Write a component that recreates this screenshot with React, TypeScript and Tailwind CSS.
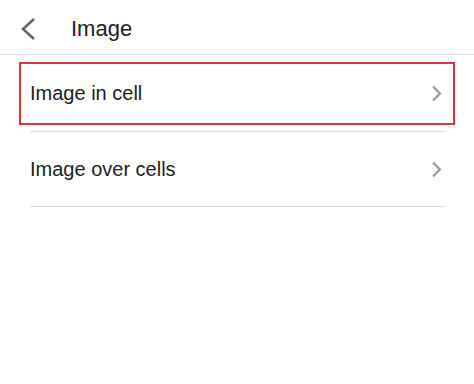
import React from "react";

const Chevron = () => (
  <svg width="11" height="17" viewBox="0 0 11 17" className="shrink-0">
    <polyline
      points="2,1.5 9,8.5 2,15.5"
      fill="none"
      stroke="#9b9b9b"
      strokeWidth="2.2"
    />
  </svg>
);

const Row = ({ label, height }: { label: string; height: string }) => (
  <div
    className={`flex items-center justify-between ml-[30px] mr-[29px] pr-[3px] border-b border-[#dcdcdc] ${height}`}
  >
    <span className="text-[20px] text-[#222]">{label}</span>
    <Chevron />
  </div>
);

const App = () => {
  return (
    <div
      className="relative w-[474px] h-[384px] bg-white overflow-hidden"
      style={{ fontFamily: '"Liberation Sans", Arial, sans-serif' }}
    >
      <header className="flex items-center h-[55px] border-b border-[#e3e3e3] pt-[3px]">
        <svg width="18" height="24" viewBox="0 0 18 24" className="ml-[19px]">
          <polyline
            points="15,2 4,12 15,22"
            fill="none"
            stroke="#666"
            strokeWidth="2.6"
          />
        </svg>
        <h1 className="ml-[34px] text-[22px] text-[#222]">Image</h1>
      </header>

      <Row label="Image in cell" height="h-[77px]" />
      <Row label="Image over cells" height="h-[75px]" />

      <div className="absolute left-[19px] top-[62px] w-[436px] h-[63px] border-2 border-[#e0303c]" />
    </div>
  );
};

export default App;
